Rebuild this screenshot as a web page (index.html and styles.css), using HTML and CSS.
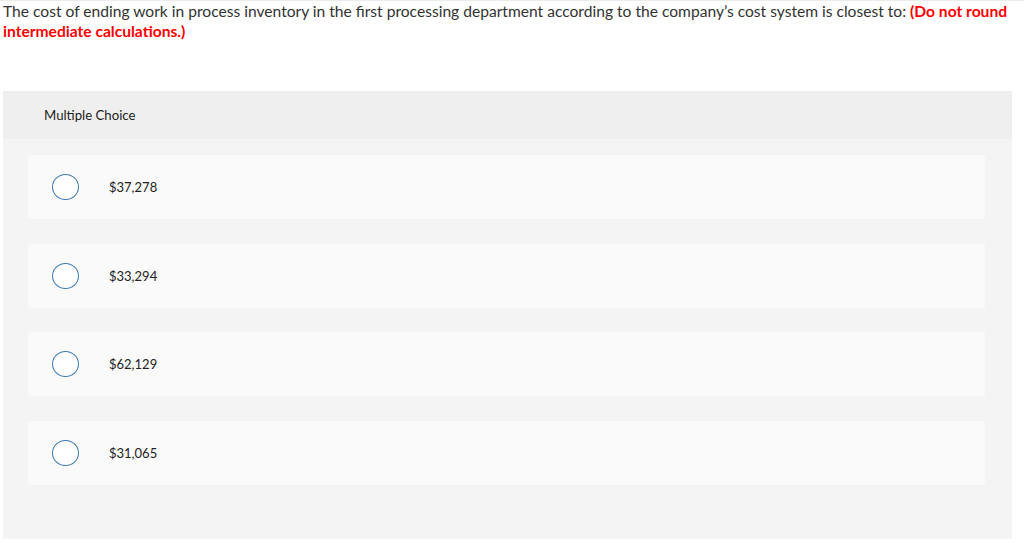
FILE: index.html
```html
<!DOCTYPE html>
<html>
<head>
<meta charset="utf-8">
<link rel="stylesheet" href="styles.css">
</head>
<body>
<div class="page">
  <p class="question">The cost of ending work in process inventory in the first processing department according to the company’s cost system is closest to: <strong class="note">(Do not round intermediate calculations.)</strong></p>
  <section class="mc">
    <div class="mc-head">Multiple Choice</div>
    <div class="mc-body">
      <label class="option"><span class="radio"></span><span class="value">$37,278</span></label>
      <label class="option"><span class="radio"></span><span class="value">$33,294</span></label>
      <label class="option"><span class="radio"></span><span class="value">$62,129</span></label>
      <label class="option"><span class="radio"></span><span class="value">$31,065</span></label>
    </div>
  </section>
</div>
</body>
</html>
```
FILE: styles.css
```css
html, body {
  margin: 0;
  padding: 0;
  background: #ffffff;
}
body {
  font-family: Lato, "Liberation Sans", sans-serif;
  color: #333333;
}
.page {
  border-top: 1px solid #ececec;
  padding: 0 12px 0 3px;
}
.question {
  margin: 0;
  font-size: 15.6px;
  line-height: 20px;
  color: #333333;
}
.note {
  color: #ff0000;
  font-weight: 700;
}
.mc {
  margin-top: 50px;
  background: #f4f4f4;
  width: 1009px;
}
.mc-head {
  height: 48px;
  background: #efefef;
  display: flex;
  align-items: center;
  padding-left: 41px;
  font-size: 13.2px;
  color: #222222;
}
.mc-body {
  padding: 16px 27px 54px 25px;
  display: flex;
  flex-direction: column;
  gap: 24.67px;
}
.option {
  height: 64px;
  background: #fafafa;
  border-radius: 3px;
  display: flex;
  align-items: center;
  padding-left: 24px;
}
.radio {
  box-sizing: border-box;
  width: 27px;
  height: 26px;
  border: 1.5px solid #3f79b5;
  border-radius: 50%;
  background: #ffffff;
  flex: none;
}
.value {
  margin-left: 30px;
  font-size: 13px;
  color: #222222;
}
```
